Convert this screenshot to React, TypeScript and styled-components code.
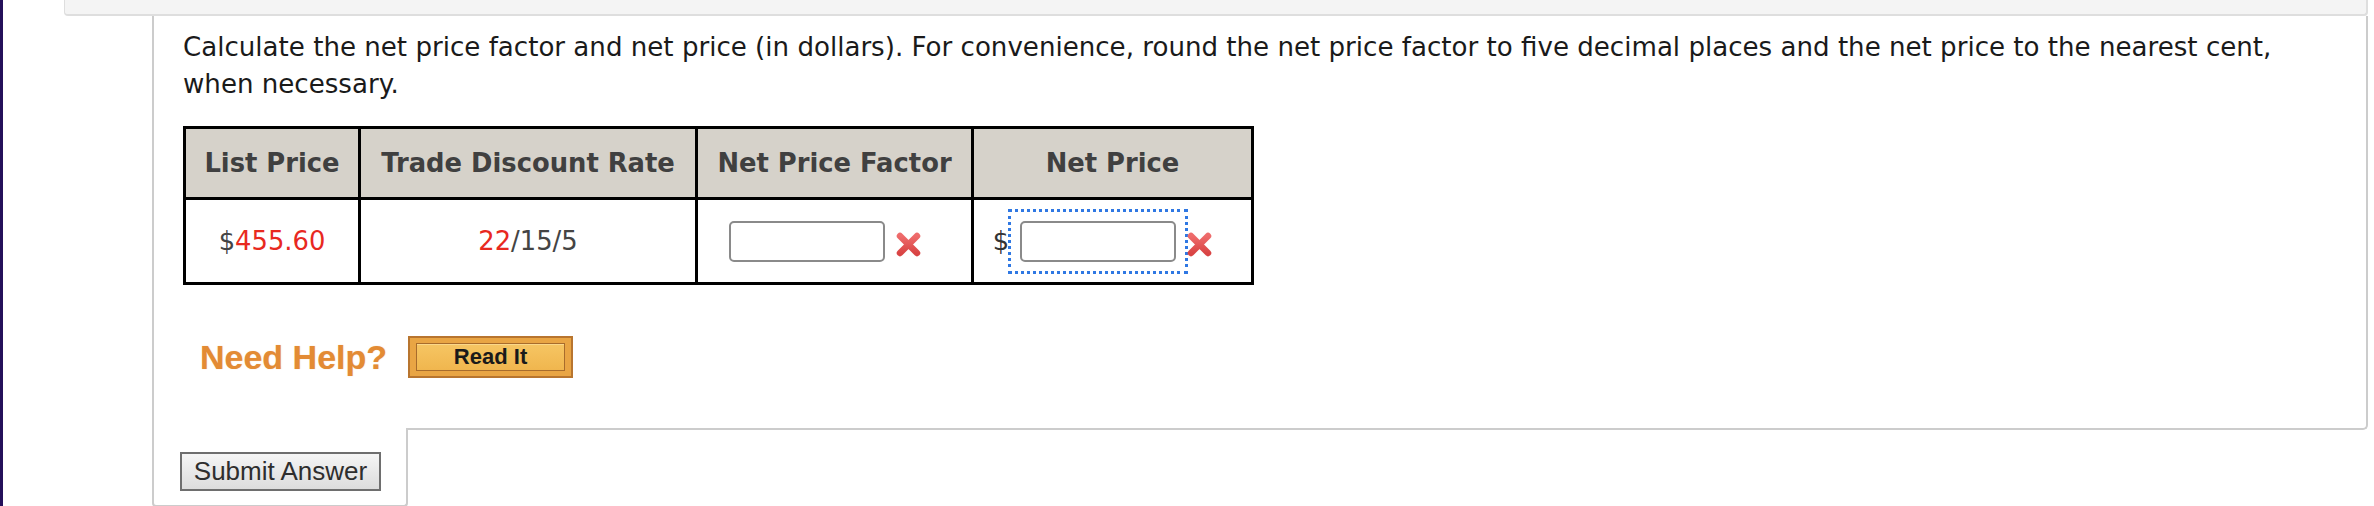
import React from "react";
import styled, { createGlobalStyle } from "styled-components";

const GlobalStyle = createGlobalStyle`
  html, body {
    margin: 0;
    padding: 0;
    background: #fff;
  }
  body {
    font-family: "DejaVu Sans", Verdana, sans-serif;
    color: #1a1a1a;
  }
`;

const WrongMark = () => (
  <Mark width="27" height="25" viewBox="0 0 27 25" aria-hidden="true">
    <defs>
      <linearGradient id="xg" x1="0" y1="0" x2="0" y2="1">
        <stop offset="0" stopColor="#ee6b6b" />
        <stop offset="1" stopColor="#d94444" />
      </linearGradient>
    </defs>
    <path
      d="M5 4 L22 21 M22 4 L5 21"
      stroke="url(#xg)"
      strokeWidth="6.5"
      strokeLinecap="round"
      fill="none"
    />
  </Mark>
);

const App = () => {
  return (
    <>
      <GlobalStyle />
      <Page>
        <Stripe />
        <Main>
          <TopBar />
          <Card>
            <Prompt>
              Calculate the net price factor and net price (in dollars). For
              convenience, round the net price factor to five decimal places and
              the net price to the nearest cent, when necessary.
            </Prompt>
            <Grid>
              <thead>
                <tr>
                  <HeadCell $w={175}>List Price</HeadCell>
                  <HeadCell $w={337}>Trade Discount Rate</HeadCell>
                  <HeadCell $w={276}>Net Price Factor</HeadCell>
                  <HeadCell $w={280}>Net Price</HeadCell>
                </tr>
              </thead>
              <tbody>
                <tr>
                  <BodyCell>
                    $<Red>455.60</Red>
                  </BodyCell>
                  <BodyCell>
                    <Red>22</Red>/15/5
                  </BodyCell>
                  <BodyCell>
                    <Answer>
                      <AnswerInput type="text" />
                      <WrongMark />
                    </Answer>
                  </BodyCell>
                  <BodyCell>
                    <Answer>
                      <Dollar>$</Dollar>
                      <Focused>
                        <AnswerInput type="text" />
                      </Focused>
                      <WrongMark />
                    </Answer>
                  </BodyCell>
                </tr>
              </tbody>
            </Grid>
            <HelpRow>
              <HelpLabel>Need Help?</HelpLabel>
              <ReadIt type="button">
                <ReadItFace>Read It</ReadItFace>
              </ReadIt>
            </HelpRow>
          </Card>
          <Tab>
            <SubmitButton type="button">Submit Answer</SubmitButton>
          </Tab>
        </Main>
      </Page>
    </>
  );
};

export default App;

const Page = styled.div`
  display: flex;
  width: 2374px;
  height: 506px;
  overflow: hidden;
`;

const Stripe = styled.div`
  width: 3px;
  flex-shrink: 0;
  background: #24105a;
`;

const Main = styled.div`
  flex: 1;
  display: flex;
  flex-direction: column;
  padding-right: 6px;
`;

const TopBar = styled.div`
  flex-shrink: 0;
  height: 14px;
  margin-left: 61px;
  background: #f4f4f4;
  border: 2px solid #dedede;
  border-top: none;
  border-left-width: 1px;
  border-radius: 0 0 4px 4px;
`;

const Card = styled.div`
  flex-shrink: 0;
  margin-left: 149px;
  padding: 13px 0 50px 29px;
  border: 2px solid #cccccc;
  border-top: none;
  border-bottom-right-radius: 5px;
`;

const Prompt = styled.p`
  margin: 0 0 23px;
  max-width: 2120px;
  font-family: "DejaVu Sans", Verdana, sans-serif;
  font-size: 26.1px;
  line-height: 37px;
  color: #1a1a1a;
`;

const Grid = styled.table`
  table-layout: fixed;
  border-collapse: separate;
  border-spacing: 0;
  border-top: 3px solid #000;
  border-left: 3px solid #000;
  font-family: "DejaVu Sans", Verdana, sans-serif;
`;

const HeadCell = styled.th<{ $w: number }>`
  box-sizing: border-box;
  width: ${(p) => p.$w}px;
  height: 71px;
  padding: 0;
  background: #d6d2ca;
  border-right: 3px solid #000;
  border-bottom: 3px solid #000;
  color: #404040;
  font-size: 25.8px;
  font-weight: bold;
  text-align: center;
  vertical-align: middle;
`;

const BodyCell = styled.td`
  box-sizing: border-box;
  height: 85px;
  padding: 0;
  border-right: 3px solid #000;
  border-bottom: 3px solid #000;
  color: #444;
  font-size: 25.8px;
  text-align: center;
  vertical-align: middle;
`;

const Red = styled.span`
  color: #e8291f;
`;

const Answer = styled.div`
  display: flex;
  align-items: center;
  justify-content: center;
  padding-right: 19px;
`;

const Dollar = styled.span`
  margin-right: 11px;
  color: #333;
  font-size: 25.8px;
`;

const Focused = styled.span`
  display: inline-flex;
  outline: 3px dotted #2f78e3;
  outline-offset: 9px;
`;

const AnswerInput = styled.input`
  box-sizing: border-box;
  width: 156px;
  height: 41px;
  margin: 0;
  padding: 0 6px;
  border: 2px solid #8a8a8a;
  border-radius: 5px;
  background: #fff;
  font-size: 22px;
  outline: none;
`;

const Mark = styled.svg`
  display: block;
  flex-shrink: 0;
  margin-left: 10px;
  margin-top: 6px;
`;

const HelpRow = styled.div`
  display: flex;
  align-items: center;
  gap: 21px;
  margin: 51px 0 0 17px;
`;

const HelpLabel = styled.span`
  font-family: "Liberation Sans", Arial, sans-serif;
  font-size: 34px;
  font-weight: bold;
  color: #e38b34;
  text-shadow: 0 0 1px rgba(227, 139, 52, 0.5);
`;

const ReadIt = styled.button`
  box-sizing: border-box;
  width: 165px;
  height: 42px;
  padding: 5px 6px;
  border: 2px solid #b8752f;
  background: #e9a544;
  cursor: pointer;
`;

const ReadItFace = styled.span`
  display: flex;
  align-items: center;
  justify-content: center;
  height: 100%;
  box-sizing: border-box;
  border: 1px solid #a86c2c;
  background: linear-gradient(#f6c563, #f0b64e);
  box-shadow: inset 0 1px 0 #fbd88a;
  font-family: "Liberation Sans", Arial, sans-serif;
  font-size: 22px;
  font-weight: bold;
  color: #1a1a1a;
`;

const Tab = styled.div`
  box-sizing: border-box;
  flex-shrink: 0;
  width: 256px;
  height: 79px;
  margin: -2px 0 0 149px;
  padding: 24px 0 0 26px;
  background: #fff;
  border: 2px solid #cccccc;
  border-top: none;
  border-radius: 0 0 4px 4px;
  position: relative;
`;

const SubmitButton = styled.button`
  box-sizing: border-box;
  height: 39px;
  width: 201px;
  padding: 0 10px;
  border: 2px solid #6e6e6e;
  background: linear-gradient(#f5f5f5, #dcdcdc);
  font-family: "Liberation Sans", Arial, sans-serif;
  font-size: 26px;
  color: #2e2e2e;
  cursor: pointer;
`;
